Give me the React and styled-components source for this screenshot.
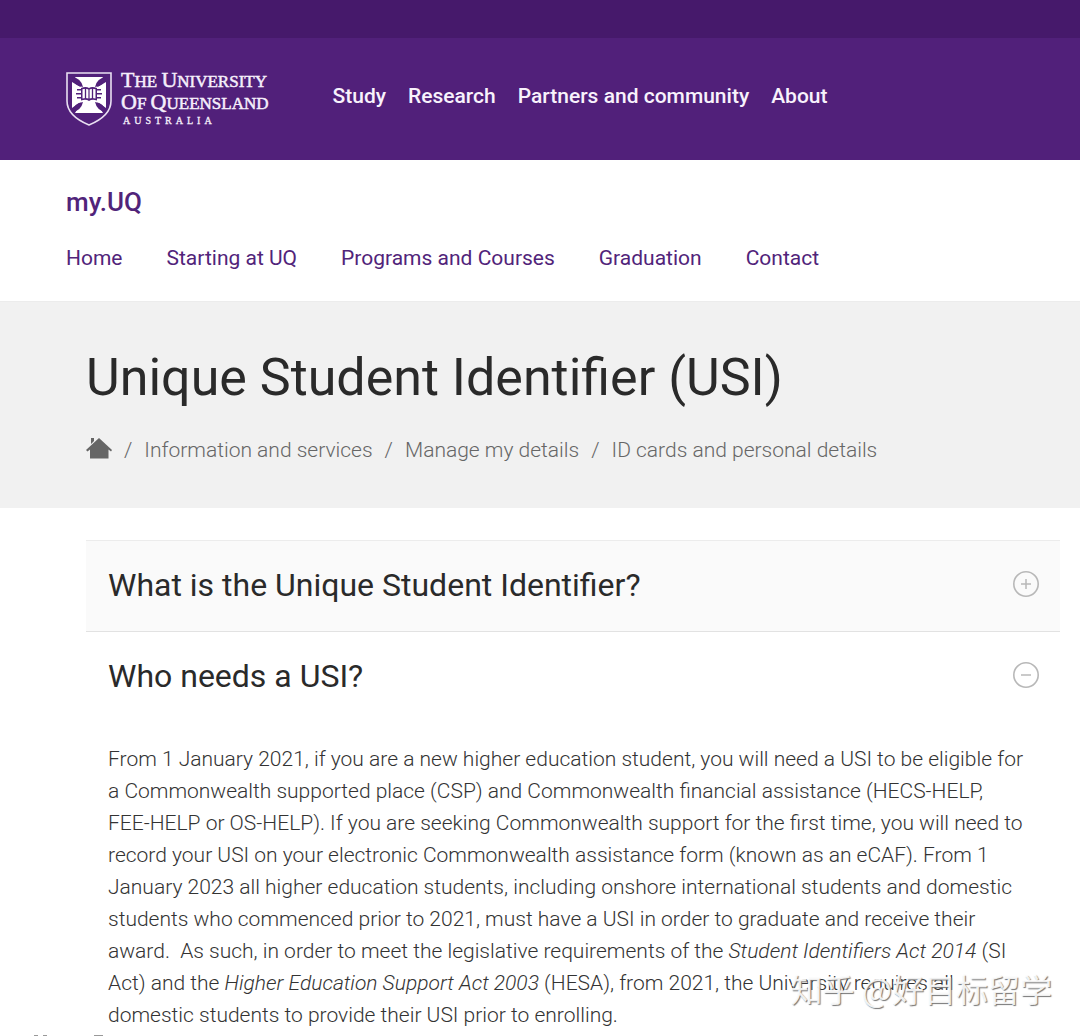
// Import React and necessary hooks
import React, { useState } from "react";
// Import styling library
import styled, { createGlobalStyle } from "styled-components";

const GlobalStyle = createGlobalStyle`
  * {
    box-sizing: border-box;
  }
  body {
    margin: 0;
    background-color: #ffffff;
    color: #2a2a2a;
    font-family: Roboto, "Noto Sans CJK SC", sans-serif;
    font-size: 21px;
    line-height: 32px;
  }
`;

const mainLinks = ["Study", "Research", "Partners and community", "About"];
const siteLinks = ["Home", "Starting at UQ", "Programs and Courses", "Graduation", "Contact"];
const crumbs = ["Information and services", "Manage my details", "ID cards and personal details"];

// Shield part of the university logo
function Shield() {
    return (
        <svg width="46" height="56" viewBox="0 0 46 56" aria-hidden="true">
            <path
                d="M1 2H45V30C45 42 35 49 23 54C11 49 1 42 1 30Z"
                fill="none"
                stroke="#e9dff2"
                strokeWidth="1.6"
            />
            {/* Cross */}
            <path
                d="M9 6H37L31 16Q32 16 40 11V37Q32 31 31 32L37 42H9L15 32Q14 31 6 37V11Q14 16 15 16Z"
                fill="#ffffff"
            />
            {/* Corner leaves */}
            <g fill="#51207a">
                <path d="M6 6Q15 7 17 16Q8 15 6 6Z" />
                <path d="M40 6Q31 7 29 16Q38 15 40 6Z" />
                <path d="M6 41Q8 32 17 31Q15 40 6 41Z" />
                <path d="M40 41Q38 32 29 31Q31 40 40 41Z" />
                {/* Book with clasps */}
                <path d="M15 17Q20 15 23 17Q26 15 31 17V29.500Q26 28 23 30Q20 28 15 29.500Z" />
                <path d="M11 18H16V19.500H11ZM10 22H16V23.500H10ZM11 26H16V27.500H11ZM30 18H35V19.500H30ZM30 22H36V23.500H30ZM30 26H35V27.500H30Z" />
            </g>
            <path d="M16.500 18.200Q20 17 22.400 18.500V27.500Q20 26.500 16.500 27.500ZM29.500 18.200Q26 17 23.600 18.500V27.500Q26 26.500 29.500 27.500Z" fill="#ffffff" />
            <path d="M19.500 17V28M26.500 17V28" stroke="#51207a" strokeWidth="1.300" />
        </svg>
    );
}

// Home icon at the start of the breadcrumb
function HomeIcon() {
    return (
        <svg width="26" height="26" viewBox="0 0 26 26" aria-hidden="true">
            <path d="M5 1H8V4L5 7ZM13 1L26 13L25 14.500L22.500 12.500V21.500H4V12.500L1.500 14.500L0 13Z" fill="#666666" />
        </svg>
    );
}

// Accordion panel with a heading that toggles its content
function Panel({ title, defaultOpen = false, children }) {
    const [isOpen, setIsOpen] = useState(defaultOpen);

    return (
        <section>
            <PanelHeading>
                <PanelButton
                    type="button"
                    $open={isOpen}
                    aria-expanded={isOpen}
                    onClick={() => setIsOpen(!isOpen)}
                >
                    {title}
                    <svg width="28" height="28" viewBox="0 0 28 28" fill="none" stroke="#b8b8b8" aria-hidden="true">
                        <circle cx="14" cy="13" r="12.200" strokeWidth="1.600" />
                        <path d={isOpen ? "M9 13H19" : "M9 13H19M14 8V18"} strokeWidth="1.500" />
                    </svg>
                </PanelButton>
            </PanelHeading>
            {isOpen && <PanelBody>{children}</PanelBody>}
        </section>
    );
}

export default function App() {
    return (
        <Page>
            <GlobalStyle />
            <TopBar />
            <Header>
                <Logo href="#" aria-label="The University of Queensland, Australia">
                    <Shield />
                    <LogoText>
                        <LogoLine><b>T</b>HE <b>U</b>NIVERSITY</LogoLine>
                        <LogoLine><b>O</b>F <b>Q</b>UEENSLAND</LogoLine>
                        <LogoCountry>AUSTRALIA</LogoCountry>
                    </LogoText>
                </Logo>
                <MainNav aria-label="Main">
                    {mainLinks.map((link) => (
                        <a href="#" key={link}>{link}</a>
                    ))}
                </MainNav>
            </Header>
            <SiteHeader>
                <SiteTitle href="#">my.UQ</SiteTitle>
                <SiteNav aria-label="Site">
                    {siteLinks.map((link) => (
                        <a href="#" key={link}>{link}</a>
                    ))}
                </SiteNav>
            </SiteHeader>
            <Hero>
                <h1>Unique Student Identifier (USI)</h1>
                <Breadcrumb aria-label="Breadcrumb">
                    <a href="#" aria-label="Home"><HomeIcon /></a>
                    {crumbs.map((crumb) => (
                        <React.Fragment key={crumb}>
                            <span>/</span>
                            <a href="#">{crumb}</a>
                        </React.Fragment>
                    ))}
                </Breadcrumb>
            </Hero>
            <Main>
                <Panel title="What is the Unique Student Identifier?" />
                <Panel title="Who needs a USI?" defaultOpen>
                    <p>
                        From 1 January 2021, if you are a new higher education student, you will need a USI to be
                        eligible for a Commonwealth supported place (CSP) and Commonwealth financial assistance
                        (HECS-HELP, FEE-HELP or OS-HELP). If you are seeking Commonwealth support for the first time,
                        you will need to record your USI on your electronic Commonwealth assistance form (known as an
                        eCAF). From 1 January 2023 all higher education students, including onshore international
                        students and domestic students who commenced prior to 2021, must have a USI in order to
                        graduate and receive their award.&nbsp; As such, in order to meet the legislative requirements
                        of the <em>Student Identifiers Act 2014</em> (SI Act) and the{" "}
                        <em>Higher Education Support Act 2003</em> (HESA), from 2021, the University requires all
                        domestic students to provide their USI prior to enrolling.
                    </p>
                </Panel>
            </Main>
            <PageEnd>
                <svg width="72" height="2" viewBox="0 0 72 2" aria-hidden="true">
                    <path d="M1 1.500H5M10 1.500H14M61 1.500H70" stroke="#999999" strokeWidth="1" />
                </svg>
            </PageEnd>
            <Watermark>知乎 @好目标留学</Watermark>
        </Page>
    );
}

const Page = styled.div`
  position: relative;
  min-height: 100vh;
  a {
    text-decoration: none;
  }
`;

const TopBar = styled.div`
  height: 38px;
  background-color: #46196b;
`;

const Header = styled.header`
  display: flex;
  align-items: center;
  gap: 64px;
  padding: 32px 66px;
  background-color: #51207a;
`;

const Logo = styled.a`
  display: flex;
  align-items: center;
  gap: 9px;
  color: #f6effb;
  font-family: "Liberation Serif", serif;
`;

const LogoText = styled.span`
  display: flex;
  flex-direction: column;
`;

const LogoLine = styled.span`
  font-size: 17px;
  line-height: 21px;
  white-space: nowrap;
  -webkit-text-stroke: 0.5px #f6effb;
  b {
    font-size: 22px;
    font-weight: 400;
    line-height: 20px;
  }
`;

const LogoCountry = styled.span`
  padding-left: 2px;
  font-size: 10px;
  line-height: 14px;
  letter-spacing: 4px;
  -webkit-text-stroke: 0.3px #f6effb;
`;

const MainNav = styled.nav`
  display: flex;
  gap: 22px;
  padding-bottom: 6px;
  a {
    color: #f8f2fc;
    font-weight: 500;
    white-space: nowrap;
  }
`;

const SiteHeader = styled.div`
  padding: 26px 66px 27px;
  border-bottom: 1px solid #ececec;
`;

const SiteTitle = styled.a`
  display: block;
  color: #51247a;
  font-size: 26px;
  font-weight: 500;
`;

const SiteNav = styled.nav`
  display: flex;
  gap: 44px;
  padding-top: 24px;
  a {
    color: #51247a;
    white-space: nowrap;
  }
`;

const Hero = styled.div`
  padding: 44px 86px 42px;
  background-color: #f1f1f1;
  h1 {
    margin: 0;
    font-size: 52px;
    font-weight: 400;
    line-height: 64px;
  }
`;

const Breadcrumb = styled.nav`
  display: flex;
  align-items: center;
  gap: 12px;
  padding-top: 24px;
  color: #666666;
  font-weight: 300;
  white-space: nowrap;
  a {
    display: flex;
    color: #666666;
  }
`;

const Main = styled.main`
  padding: 32px 20px 0 86px;
`;

const PanelHeading = styled.h2`
  margin: 0;
`;

const PanelButton = styled.button`
  display: flex;
  align-items: center;
  justify-content: space-between;
  width: 100%;
  padding: 24px 20px 26px 22px;
  border: 0;
  border-top: 1px solid ${({ $open }) => ($open ? "#e2e2e2" : "#ececec")};
  background-color: ${({ $open }) => ($open ? "#ffffff" : "#fafafa")};
  color: #2a2a2a;
  font-family: inherit;
  font-size: 32px;
  line-height: 40px;
  text-align: left;
  cursor: pointer;
`;

const PanelBody = styled.div`
  padding: 21px 34px 0 22px;
  color: #333333;
  font-weight: 300;
  p {
    margin: 0;
  }
`;

const PageEnd = styled.div`
  display: flex;
  padding: 3px 33px 0;
`;

// Sits over the article text in the page corner
const Watermark = styled.div`
  position: absolute;
  right: 28px;
  bottom: 28px;
  color: rgba(255, 255, 255, 0.9);
  font-family: "Noto Sans CJK SC", sans-serif;
  font-size: 32px;
  line-height: 40px;
  text-shadow: 1px 1px 1px #777777;
`;
